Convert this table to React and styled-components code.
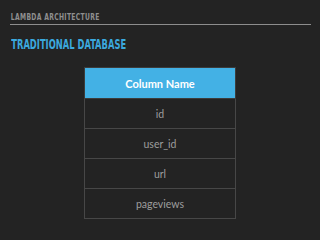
import React from "react";
import styled, { createGlobalStyle } from "styled-components";

const GlobalStyle = createGlobalStyle`
  html, body {
    margin: 0;
    padding: 0;
    background: #232323;
  }
`;

const Slide = styled.div`
  width: 320px;
  height: 240px;
  background: #232323;
  padding: 13px 9px 0 10px;
  box-sizing: border-box;
  overflow: hidden;
`;

const Kicker = styled.div`
  font-family: "DejaVu Sans Condensed", "DejaVu Sans", sans-serif;
  font-size: 8px;
  font-weight: bold;
  letter-spacing: 0.4px;
  color: #8f8f8f;
  padding-left: 1px;
  height: 11px;
  line-height: 9px;
  white-space: nowrap;
  transform: scaleX(0.84);
  transform-origin: left center;
`;

const Rule = styled.div`
  height: 1px;
  background: #8d8d8d;
  margin-bottom: 12px;
`;

const Title = styled.h1`
  margin: 0 0 15px;
  font-family: "DejaVu Sans Condensed", "DejaVu Sans", sans-serif;
  font-weight: bold;
  font-size: 14.5px;
  line-height: 15px;
  color: #3ba9de;
  padding-left: 2px;
  transform: scaleX(0.64);
  transform-origin: left center;
  white-space: nowrap;
`;

const Table = styled.table`
  margin-left: 74px;
  width: 152px;
  border-collapse: collapse;
  font-family: "Lato", "Noto Sans", sans-serif;
`;

const HeadCell = styled.th`
  height: 30px;
  background: #43b1e5;
  color: #ffffff;
  font-size: 11px;
  font-weight: bold;
  border: 1px solid #3c3c3c;
  padding: 0;
`;

const Cell = styled.td`
  height: 29px;
  color: #9d9d9d;
  font-size: 10.5px;
  text-align: center;
  border: 1px solid #474747;
  padding: 0;
`;

const columns = ["id", "user_id", "url", "pageviews"];

export default function App() {
  return (
    <>
      <GlobalStyle />
      <Slide>
        <Kicker>LAMBDA ARCHITECTURE</Kicker>
        <Rule />
        <Title>TRADITIONAL DATABASE</Title>
        <Table>
          <thead>
            <tr>
              <HeadCell>Column Name</HeadCell>
            </tr>
          </thead>
          <tbody>
            {columns.map((c) => (
              <tr key={c}>
                <Cell>{c}</Cell>
              </tr>
            ))}
          </tbody>
        </Table>
      </Slide>
    </>
  );
}
